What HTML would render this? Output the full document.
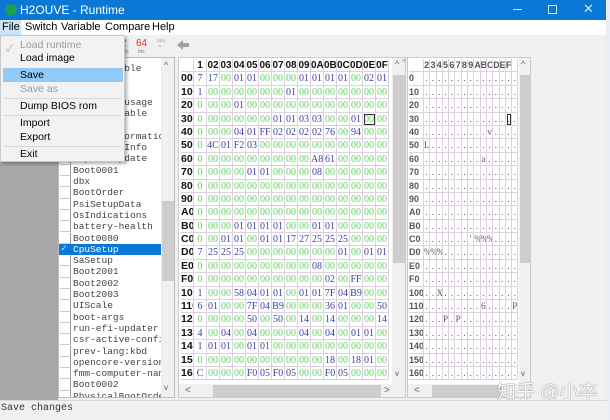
<!DOCTYPE html>
<html><head><meta charset="utf-8">
<style>
*{margin:0;padding:0;box-sizing:border-box}
body{width:610px;height:420px;overflow:hidden;background:#f0f0f0;font-family:"Liberation Sans","Noto Sans CJK SC",sans-serif;position:relative}
.abs{position:absolute}
#title{left:0;top:0;width:607px;height:20px;background:#0a78d4;color:#fff;font-size:12px}
#menubar{left:0;top:20px;width:607px;height:15px;background:#fff;font-size:11px;color:#000}
#menubar span{position:absolute;top:1px}
#winborder{left:606px;top:0;width:4px;height:420px;background:#e8eef4}
#leftgrey{left:0;top:55px;width:58px;height:345px;background:#a8a8a8}
#list{left:58px;top:57px;width:117px;height:341px;background:#fff;border:1px solid #bbb;overflow:hidden}
.li{position:absolute;left:0;height:11.3px;width:104px;font-family:"Liberation Mono",monospace;font-size:9.5px;line-height:11.3px;color:#444;white-space:nowrap;overflow:hidden}
.li .cb{position:absolute;left:1px;top:0;width:11px;height:11.3px;border-right:1px solid #999;border-bottom:1px solid #ccc}
.li .t{position:absolute;left:14px;top:0}
.li.sel{background:#0a78d7;color:#fff}
.vs{background:#f0f0f0}
#hex{left:178px;top:57px;width:228px;height:341px;background:#fff;border:1px solid #ccc;overflow:hidden}
.grid{position:absolute;display:grid;grid-auto-rows:13.4px}
.grid div{border-right:1px solid #dcd2e0;border-bottom:1px solid #dcd2e0;font-family:"Liberation Serif",serif;font-size:10px;line-height:13px;text-align:center;white-space:nowrap;overflow:hidden}
.grid div.h{font-family:"Liberation Sans",sans-serif;font-weight:bold;font-size:10.5px;color:#111;text-align:left}
.grid div.hc{font-family:"Liberation Sans",sans-serif;font-weight:bold;font-size:10px;color:#111}
.g{color:#5fd35f}.b{color:#4040a0}
.box{outline:1.5px solid #333;outline-offset:-2px}
#hg{left:2px;top:1px;grid-template-columns:13px repeat(15,13px)}
#asc{left:407px;top:57px;width:124px;height:341px;background:#fff;border:1px solid #ccc;overflow:hidden}
#ag{left:1px;top:1px;grid-template-columns:15px repeat(15,6.3px)}
#ag div{color:#555;font-size:9px}
#status{left:0;top:400px;width:607px;height:20px;background:#f0f0f0;border-top:1px solid #d8d8d8;font-family:"Liberation Mono",monospace;font-size:10px;color:#333;padding:2px 0 0 1px}
#menu{left:0;top:35px;width:125px;height:127px;background:#f2f2f2;border:1px solid #c8c8c8;box-shadow:2px 2px 3px rgba(0,0,0,.3);font-size:10.5px}
#menu div{position:absolute;left:19px}
.sep{position:absolute;left:3px!important;width:117px;height:1px;background:#d8d8d8}
</style></head><body>
<div id="title" class="abs">
  <div class="abs" style="left:5px;top:4px;width:12px;height:12px;border-radius:6px;background:#1aa05a"></div>
  <div class="abs" style="left:20px;top:3px">H2OUVE - Runtime</div>
  <div class="abs" style="left:513px;top:9px;width:9px;height:1px;background:#cfe3f5"></div>
  <div class="abs" style="left:548px;top:5px;width:9px;height:9px;border:1px solid #cfe3f5"></div>
  <div class="abs" style="left:583px;top:1px;color:#cfe3f5;font-size:13px">✕</div>
</div>
<div id="menubar" class="abs">
  <div class="abs" style="left:0;top:0;width:21px;height:15px;background:#cce4f7"></div>
  <span style="left:2px">File</span><span style="left:25px">Switch</span><span style="left:61px">Variable</span><span style="left:105px">Compare</span><span style="left:152px">Help</span>
</div>
<div id="winborder" class="abs"></div>
<div class="abs" style="left:121px;top:38px;color:#e03030;font-size:10px">2</div>
<div class="abs" style="left:136px;top:38px;color:#e03030;font-size:10px">64</div>
<div class="abs" style="left:122px;top:49px;color:#888;font-size:5px">bts</div>
<div class="abs" style="left:138px;top:49px;color:#888;font-size:5px">bts</div>
<div class="abs" style="left:157px;top:38px;color:#aaa;font-size:5px;line-height:6px">aau<br>&nbsp;=</div>
<svg class="abs" style="left:176px;top:39px" width="14" height="12"><path d="M1 6 L7 1 L7 4 L13 4 L13 8 L7 8 L7 11 Z" fill="#a0a0a0"/></svg>

<div id="leftgrey" class="abs"></div>
<div id="list" class="abs">
<div class="li" style="top:5px"><span class="cb"></span><span class="t">DriverEnable</span></div>
<div class="li" style="top:16.3px"><span class="cb"></span><span class="t">ConOutDev</span></div>
<div class="li" style="top:27.6px"><span class="cb"></span><span class="t">ConInDevs</span></div>
<div class="li" style="top:38.9px"><span class="cb"></span><span class="t">Hardware-usage</span></div>
<div class="li" style="top:50.2px"><span class="cb"></span><span class="t">SetupVariable</span></div>
<div class="li" style="top:61.5px"><span class="cb"></span><span class="t">Lang</span></div>
<div class="li" style="top:72.8px"><span class="cb"></span><span class="t">SecureInformation</span></div>
<div class="li" style="top:84.1px"><span class="cb"></span><span class="t">AcpiFlashInfo</span></div>
<div class="li" style="top:95.4px"><span class="cb"></span><span class="t">CapsuleUpdate</span></div>
<div class="li" style="top:106.7px"><span class="cb"></span><span class="t">Boot0001</span></div>
<div class="li" style="top:118px"><span class="cb"></span><span class="t">dbx</span></div>
<div class="li" style="top:129.3px"><span class="cb"></span><span class="t">BootOrder</span></div>
<div class="li" style="top:140.6px"><span class="cb"></span><span class="t">PsiSetupData</span></div>
<div class="li" style="top:151.9px"><span class="cb"></span><span class="t">OsIndications</span></div>
<div class="li" style="top:163.2px"><span class="cb"></span><span class="t">battery-health</span></div>
<div class="li" style="top:174.5px"><span class="cb"></span><span class="t">Boot0080</span></div>
<div class="li sel" style="top:185.8px"><span class="cb" style="border:none;color:#cfe6ff;left:2px;font-size:10px">✓</span><span class="t">CpuSetup</span></div>
<div class="li" style="top:197.1px"><span class="cb"></span><span class="t">SaSetup</span></div>
<div class="li" style="top:208.4px"><span class="cb"></span><span class="t">Boot2001</span></div>
<div class="li" style="top:219.7px"><span class="cb"></span><span class="t">Boot2002</span></div>
<div class="li" style="top:231px"><span class="cb"></span><span class="t">Boot2003</span></div>
<div class="li" style="top:242.3px"><span class="cb"></span><span class="t">UIScale</span></div>
<div class="li" style="top:253.6px"><span class="cb"></span><span class="t">boot-args</span></div>
<div class="li" style="top:264.9px"><span class="cb"></span><span class="t">run-efi-updater</span></div>
<div class="li" style="top:276.2px"><span class="cb"></span><span class="t">csr-active-config</span></div>
<div class="li" style="top:287.5px"><span class="cb"></span><span class="t">prev-lang:kbd</span></div>
<div class="li" style="top:298.8px"><span class="cb"></span><span class="t">opencore-version</span></div>
<div class="li" style="top:310.1px"><span class="cb"></span><span class="t">fmm-computer-name</span></div>
<div class="li" style="top:321.4px"><span class="cb"></span><span class="t">Boot0002</span></div>
<div class="li" style="top:332.7px"><span class="cb"></span><span class="t">PhysicalBootOrder</span></div>
<div class="abs vs" style="left:102px;top:0;width:13px;height:339px"></div>
<div class="abs" style="left:103px;top:143px;width:12px;height:80px;background:#cdcdcd"></div>
<div class="abs" style="left:105px;top:2px;font-size:9px;color:#666">^</div>
<div class="abs" style="left:105px;top:325px;font-size:8px;color:#666">v</div>
</div>

<div id="hex" class="abs">
<div id="hg" class="grid">
<div class="hc"></div><div class="hc">1</div><div class="hc">02</div><div class="hc">03</div><div class="hc">04</div><div class="hc">05</div><div class="hc">06</div><div class="hc">07</div><div class="hc">08</div><div class="hc">09</div><div class="hc">0A</div><div class="hc">0B</div><div class="hc">0C</div><div class="hc">0D</div><div class="hc">0E</div><div class="hc">0F</div>
<div class="h">00</div><div class="b">7</div><div class="b">17</div><div class="g">00</div><div class="b">01</div><div class="b">01</div><div class="g">00</div><div class="g">00</div><div class="g">00</div><div class="b">01</div><div class="b">01</div><div class="b">01</div><div class="b">01</div><div class="g">00</div><div class="b">02</div><div class="b">01</div>
<div class="h">10</div><div class="b">1</div><div class="g">00</div><div class="g">00</div><div class="g">00</div><div class="g">00</div><div class="g">00</div><div class="g">00</div><div class="b">01</div><div class="g">00</div><div class="g">00</div><div class="g">00</div><div class="g">00</div><div class="g">00</div><div class="g">00</div><div class="g">00</div>
<div class="h">20</div><div class="g">0</div><div class="g">00</div><div class="g">00</div><div class="b">01</div><div class="g">00</div><div class="g">00</div><div class="g">00</div><div class="g">00</div><div class="g">00</div><div class="g">00</div><div class="g">00</div><div class="g">00</div><div class="g">00</div><div class="g">00</div><div class="g">00</div>
<div class="h">30</div><div class="g">0</div><div class="g">00</div><div class="g">00</div><div class="g">00</div><div class="g">00</div><div class="g">00</div><div class="b">01</div><div class="b">01</div><div class="b">03</div><div class="b">03</div><div class="g">00</div><div class="g">00</div><div class="b">01</div><div class="g box">00</div><div class="g">00</div>
<div class="h">40</div><div class="g">0</div><div class="g">00</div><div class="g">00</div><div class="b">04</div><div class="b">01</div><div class="b">FF</div><div class="b">02</div><div class="b">02</div><div class="b">02</div><div class="b">02</div><div class="b">76</div><div class="g">00</div><div class="b">94</div><div class="g">00</div><div class="g">00</div>
<div class="h">50</div><div class="g">0</div><div class="b">4C</div><div class="b">01</div><div class="b">F2</div><div class="b">03</div><div class="g">00</div><div class="g">00</div><div class="g">00</div><div class="g">00</div><div class="g">00</div><div class="g">00</div><div class="g">00</div><div class="g">00</div><div class="g">00</div><div class="g">00</div>
<div class="h">60</div><div class="g">0</div><div class="g">00</div><div class="g">00</div><div class="g">00</div><div class="g">00</div><div class="g">00</div><div class="g">00</div><div class="g">00</div><div class="g">00</div><div class="b">A8</div><div class="b">61</div><div class="g">00</div><div class="g">00</div><div class="g">00</div><div class="g">00</div>
<div class="h">70</div><div class="g">0</div><div class="g">00</div><div class="g">00</div><div class="g">00</div><div class="b">01</div><div class="b">01</div><div class="g">00</div><div class="g">00</div><div class="g">00</div><div class="b">08</div><div class="g">00</div><div class="g">00</div><div class="g">00</div><div class="g">00</div><div class="g">00</div>
<div class="h">80</div><div class="g">0</div><div class="g">00</div><div class="g">00</div><div class="g">00</div><div class="g">00</div><div class="g">00</div><div class="g">00</div><div class="g">00</div><div class="g">00</div><div class="g">00</div><div class="g">00</div><div class="g">00</div><div class="g">00</div><div class="g">00</div><div class="g">00</div>
<div class="h">90</div><div class="g">0</div><div class="g">00</div><div class="g">00</div><div class="g">00</div><div class="g">00</div><div class="g">00</div><div class="g">00</div><div class="g">00</div><div class="g">00</div><div class="g">00</div><div class="g">00</div><div class="g">00</div><div class="g">00</div><div class="g">00</div><div class="g">00</div>
<div class="h">A0</div><div class="g">0</div><div class="g">00</div><div class="g">00</div><div class="g">00</div><div class="g">00</div><div class="g">00</div><div class="g">00</div><div class="g">00</div><div class="g">00</div><div class="g">00</div><div class="g">00</div><div class="g">00</div><div class="g">00</div><div class="g">00</div><div class="g">00</div>
<div class="h">B0</div><div class="g">0</div><div class="g">00</div><div class="g">00</div><div class="b">01</div><div class="b">01</div><div class="b">01</div><div class="b">01</div><div class="g">00</div><div class="g">00</div><div class="b">01</div><div class="b">01</div><div class="g">00</div><div class="g">00</div><div class="g">00</div><div class="g">00</div>
<div class="h">C0</div><div class="g">0</div><div class="g">00</div><div class="b">01</div><div class="b">01</div><div class="g">00</div><div class="b">01</div><div class="b">01</div><div class="b">17</div><div class="b">27</div><div class="b">25</div><div class="b">25</div><div class="b">25</div><div class="g">00</div><div class="g">00</div><div class="g">00</div>
<div class="h">D0</div><div class="b">7</div><div class="b">25</div><div class="b">25</div><div class="b">25</div><div class="g">00</div><div class="g">00</div><div class="g">00</div><div class="g">00</div><div class="g">00</div><div class="g">00</div><div class="g">00</div><div class="b">01</div><div class="g">00</div><div class="b">01</div><div class="b">01</div>
<div class="h">E0</div><div class="g">0</div><div class="g">00</div><div class="g">00</div><div class="g">00</div><div class="g">00</div><div class="g">00</div><div class="g">00</div><div class="g">00</div><div class="g">00</div><div class="b">08</div><div class="g">00</div><div class="g">00</div><div class="g">00</div><div class="g">00</div><div class="g">00</div>
<div class="h">F0</div><div class="g">0</div><div class="g">00</div><div class="g">00</div><div class="g">00</div><div class="g">00</div><div class="g">00</div><div class="g">00</div><div class="g">00</div><div class="g">00</div><div class="g">00</div><div class="b">02</div><div class="g">00</div><div class="b">FF</div><div class="g">00</div><div class="g">00</div>
<div class="h">100</div><div class="b">1</div><div class="g">00</div><div class="g">00</div><div class="b">58</div><div class="b">04</div><div class="b">01</div><div class="b">01</div><div class="g">00</div><div class="b">01</div><div class="b">01</div><div class="b">7F</div><div class="b">04</div><div class="b">B9</div><div class="g">00</div><div class="g">00</div>
<div class="h">110</div><div class="b">6</div><div class="b">01</div><div class="g">00</div><div class="g">00</div><div class="b">7F</div><div class="b">04</div><div class="b">B9</div><div class="g">00</div><div class="g">00</div><div class="g">00</div><div class="b">36</div><div class="b">01</div><div class="g">00</div><div class="g">00</div><div class="b">50</div>
<div class="h">120</div><div class="g">0</div><div class="g">00</div><div class="g">00</div><div class="g">00</div><div class="b">50</div><div class="g">00</div><div class="b">50</div><div class="g">00</div><div class="b">14</div><div class="g">00</div><div class="b">14</div><div class="g">00</div><div class="g">00</div><div class="g">00</div><div class="b">14</div>
<div class="h">130</div><div class="b">4</div><div class="g">00</div><div class="b">04</div><div class="g">00</div><div class="b">04</div><div class="g">00</div><div class="g">00</div><div class="g">00</div><div class="b">04</div><div class="g">00</div><div class="b">04</div><div class="g">00</div><div class="b">01</div><div class="b">01</div><div class="g">00</div>
<div class="h">140</div><div class="b">1</div><div class="b">01</div><div class="b">01</div><div class="g">00</div><div class="b">01</div><div class="b">01</div><div class="g">00</div><div class="g">00</div><div class="g">00</div><div class="g">00</div><div class="g">00</div><div class="g">00</div><div class="g">00</div><div class="g">00</div><div class="g">00</div>
<div class="h">150</div><div class="g">0</div><div class="g">00</div><div class="g">00</div><div class="g">00</div><div class="g">00</div><div class="g">00</div><div class="g">00</div><div class="g">00</div><div class="g">00</div><div class="g">00</div><div class="b">18</div><div class="g">00</div><div class="b">18</div><div class="b">01</div><div class="g">00</div>
<div class="h">160</div><div class="b">C</div><div class="g">00</div><div class="g">00</div><div class="g">00</div><div class="b">F0</div><div class="b">05</div><div class="b">F0</div><div class="b">05</div><div class="g">00</div><div class="g">00</div><div class="b">F0</div><div class="b">05</div><div class="g">00</div><div class="g">00</div><div class="g">00</div>
</div>
<div class="abs vs" style="left:213px;top:0;width:14px;height:326px"></div>
<div class="abs" style="left:214px;top:17px;width:12px;height:188px;background:#cdcdcd"></div>
<div class="abs" style="left:216px;top:1px;font-size:9px;color:#666">^</div>
<div class="abs" style="left:216px;top:311px;font-size:8px;color:#666">v</div>
<div class="abs vs" style="left:0;top:326px;width:227px;height:14px"></div>
<div class="abs" style="left:34px;top:327px;width:168px;height:12px;background:#cdcdcd"></div>
<div class="abs" style="left:6px;top:327px;font-size:10px;color:#666">&lt;</div>
<div class="abs" style="left:205px;top:327px;font-size:10px;color:#666">&gt;</div>
</div>

<div id="asc" class="abs">
<div id="ag" class="grid">
<div class="hc"></div><div class="hc">2</div><div class="hc">3</div><div class="hc">4</div><div class="hc">5</div><div class="hc">6</div><div class="hc">7</div><div class="hc">8</div><div class="hc">9</div><div class="hc">A</div><div class="hc">B</div><div class="hc">C</div><div class="hc">D</div><div class="hc">E</div><div class="hc">F</div><div class="hc"></div>
<div class="h">0</div><div>.</div><div>.</div><div>.</div><div>.</div><div>.</div><div>.</div><div>.</div><div>.</div><div>.</div><div>.</div><div>.</div><div>.</div><div>.</div><div>.</div><div>.</div>
<div class="h">10</div><div>.</div><div>.</div><div>.</div><div>.</div><div>.</div><div>.</div><div>.</div><div>.</div><div>.</div><div>.</div><div>.</div><div>.</div><div>.</div><div>.</div><div>.</div>
<div class="h">20</div><div>.</div><div>.</div><div>.</div><div>.</div><div>.</div><div>.</div><div>.</div><div>.</div><div>.</div><div>.</div><div>.</div><div>.</div><div>.</div><div>.</div><div>.</div>
<div class="h">30</div><div>.</div><div>.</div><div>.</div><div>.</div><div>.</div><div>.</div><div>.</div><div>.</div><div>.</div><div>.</div><div>.</div><div>.</div><div>.</div><div class="box">.</div><div>.</div>
<div class="h">40</div><div>.</div><div>.</div><div>.</div><div>.</div><div>.</div><div>.</div><div>.</div><div>.</div><div>.</div><div>.</div><div>v</div><div>.</div><div>.</div><div>.</div><div>.</div>
<div class="h">50</div><div>L</div><div>.</div><div>.</div><div>.</div><div>.</div><div>.</div><div>.</div><div>.</div><div>.</div><div>.</div><div>.</div><div>.</div><div>.</div><div>.</div><div>.</div>
<div class="h">60</div><div>.</div><div>.</div><div>.</div><div>.</div><div>.</div><div>.</div><div>.</div><div>.</div><div>.</div><div>a</div><div>.</div><div>.</div><div>.</div><div>.</div><div>.</div>
<div class="h">70</div><div>.</div><div>.</div><div>.</div><div>.</div><div>.</div><div>.</div><div>.</div><div>.</div><div>.</div><div>.</div><div>.</div><div>.</div><div>.</div><div>.</div><div>.</div>
<div class="h">80</div><div>.</div><div>.</div><div>.</div><div>.</div><div>.</div><div>.</div><div>.</div><div>.</div><div>.</div><div>.</div><div>.</div><div>.</div><div>.</div><div>.</div><div>.</div>
<div class="h">90</div><div>.</div><div>.</div><div>.</div><div>.</div><div>.</div><div>.</div><div>.</div><div>.</div><div>.</div><div>.</div><div>.</div><div>.</div><div>.</div><div>.</div><div>.</div>
<div class="h">A0</div><div>.</div><div>.</div><div>.</div><div>.</div><div>.</div><div>.</div><div>.</div><div>.</div><div>.</div><div>.</div><div>.</div><div>.</div><div>.</div><div>.</div><div>.</div>
<div class="h">B0</div><div>.</div><div>.</div><div>.</div><div>.</div><div>.</div><div>.</div><div>.</div><div>.</div><div>.</div><div>.</div><div>.</div><div>.</div><div>.</div><div>.</div><div>.</div>
<div class="h">C0</div><div>.</div><div>.</div><div>.</div><div>.</div><div>.</div><div>.</div><div>.</div><div>'</div><div>%</div><div>%</div><div>%</div><div>.</div><div>.</div><div>.</div><div>.</div>
<div class="h">D0</div><div>%</div><div>%</div><div>%</div><div>.</div><div>.</div><div>.</div><div>.</div><div>.</div><div>.</div><div>.</div><div>.</div><div>.</div><div>.</div><div>.</div><div>.</div>
<div class="h">E0</div><div>.</div><div>.</div><div>.</div><div>.</div><div>.</div><div>.</div><div>.</div><div>.</div><div>.</div><div>.</div><div>.</div><div>.</div><div>.</div><div>.</div><div>.</div>
<div class="h">F0</div><div>.</div><div>.</div><div>.</div><div>.</div><div>.</div><div>.</div><div>.</div><div>.</div><div>.</div><div>.</div><div>.</div><div>.</div><div>.</div><div>.</div><div>.</div>
<div class="h">100</div><div>.</div><div>.</div><div>X</div><div>.</div><div>.</div><div>.</div><div>.</div><div>.</div><div>.</div><div>.</div><div>.</div><div>.</div><div>.</div><div>.</div><div>.</div>
<div class="h">110</div><div>.</div><div>.</div><div>.</div><div>.</div><div>.</div><div>.</div><div>.</div><div>.</div><div>.</div><div>6</div><div>.</div><div>.</div><div>.</div><div>.</div><div>P</div>
<div class="h">120</div><div>.</div><div>.</div><div>.</div><div>P</div><div>.</div><div>P</div><div>.</div><div>.</div><div>.</div><div>.</div><div>.</div><div>.</div><div>.</div><div>.</div><div>.</div>
<div class="h">130</div><div>.</div><div>.</div><div>.</div><div>.</div><div>.</div><div>.</div><div>.</div><div>.</div><div>.</div><div>.</div><div>.</div><div>.</div><div>.</div><div>.</div><div>.</div>
<div class="h">140</div><div>.</div><div>.</div><div>.</div><div>.</div><div>.</div><div>.</div><div>.</div><div>.</div><div>.</div><div>.</div><div>.</div><div>.</div><div>.</div><div>.</div><div>.</div>
<div class="h">150</div><div>.</div><div>.</div><div>.</div><div>.</div><div>.</div><div>.</div><div>.</div><div>.</div><div>.</div><div>.</div><div>.</div><div>.</div><div>.</div><div>.</div><div>.</div>
<div class="h">160</div><div>.</div><div>.</div><div>.</div><div>.</div><div>.</div><div>.</div><div>.</div><div>.</div><div>.</div><div>.</div><div>.</div><div>.</div><div>.</div><div>.</div><div>.</div>
</div>
<div class="abs vs" style="left:111px;top:0;width:12px;height:326px"></div>
<div class="abs" style="left:112px;top:17px;width:11px;height:188px;background:#cdcdcd"></div>
<div class="abs" style="left:113px;top:1px;font-size:9px;color:#666">^</div>
<div class="abs" style="left:113px;top:311px;font-size:8px;color:#666">v</div>
<div class="abs vs" style="left:0;top:326px;width:123px;height:14px"></div>
<div class="abs" style="left:24px;top:327px;width:70px;height:12px;background:#cdcdcd"></div>
<div class="abs" style="left:6px;top:327px;font-size:10px;color:#666">&lt;</div>
</div>
<div class="abs" style="left:402px;top:58px;font-size:8px;color:#888">^</div>

<div class="abs" style="left:497px;top:377px;font-size:19px;color:#fff;text-shadow:0 0 1px #777,0 0 1px #777;font-family:'Liberation Sans','Noto Sans CJK SC',sans-serif">知乎 @小卒</div>

<div id="status" class="abs">Save changes</div>

<div id="menu" class="abs">
  <div style="left:5px;top:4px;color:#aaa;font-size:10px">✓</div>
  <div style="top:3px;color:#9a9a9a">Load runtime</div>
  <div style="top:16px">Load image</div>
  <div style="left:2px;top:32px;width:120px;height:14px;background:#91c9f7"></div>
  <div style="top:33px">Save</div>
  <div style="top:47px;color:#9a9a9a">Save as</div>
  <div class="sep" style="top:62px"></div>
  <div style="top:64px">Dump BIOS rom</div>
  <div class="sep" style="top:79px"></div>
  <div style="top:81px">Import</div>
  <div style="top:95px">Export</div>
  <div class="sep" style="top:110px"></div>
  <div style="top:112px">Exit</div>
</div>
</body></html>
